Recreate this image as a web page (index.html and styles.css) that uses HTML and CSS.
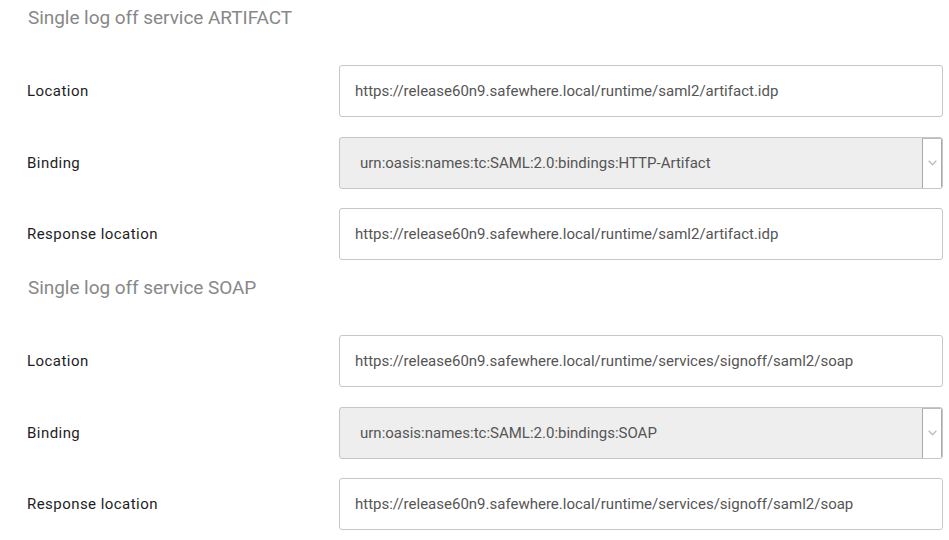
FILE: index.html
```html
<!DOCTYPE html>
<html>
<head>
<meta charset="utf-8">
<link rel="stylesheet" href="styles.css">
</head>
<body>
<div class="page">
  <section class="section">
    <h2 class="section-title">Single log off service ARTIFACT</h2>
    <div class="row">
      <label class="label">Location</label>
      <div class="input">https://release60n9.safewhere.local/runtime/saml2/artifact.idp</div>
    </div>
    <div class="row">
      <label class="label">Binding</label>
      <div class="select">
        <span class="select-value">urn:oasis:names:tc:SAML:2.0:bindings:HTTP-Artifact</span>
        <span class="select-arrow"><svg width="9" height="6" viewBox="0 0 9 6"><path d="M0.7 0.7 L4.5 4.7 L8.3 0.7" fill="none" stroke="#bdbdbd" stroke-width="1.4"/></svg></span>
      </div>
    </div>
    <div class="row">
      <label class="label">Response location</label>
      <div class="input">https://release60n9.safewhere.local/runtime/saml2/artifact.idp</div>
    </div>
  </section>
  <section class="section">
    <h2 class="section-title">Single log off service SOAP</h2>
    <div class="row">
      <label class="label">Location</label>
      <div class="input">https://release60n9.safewhere.local/runtime/services/signoff/saml2/soap</div>
    </div>
    <div class="row">
      <label class="label">Binding</label>
      <div class="select">
        <span class="select-value">urn:oasis:names:tc:SAML:2.0:bindings:SOAP</span>
        <span class="select-arrow"><svg width="9" height="6" viewBox="0 0 9 6"><path d="M0.7 0.7 L4.5 4.7 L8.3 0.7" fill="none" stroke="#bdbdbd" stroke-width="1.4"/></svg></span>
      </div>
    </div>
    <div class="row">
      <label class="label">Response location</label>
      <div class="input">https://release60n9.safewhere.local/runtime/services/signoff/saml2/soap</div>
    </div>
  </section>
</div>
</body>
</html>
```
FILE: styles.css
```css
html, body {
  margin: 0;
  padding: 0;
  background: #ffffff;
}
body {
  font-family: Roboto, "Liberation Sans", Arial, sans-serif;
}
.page {
  padding: 0 6px 0 27px;
}
.section-title {
  margin: 0;
  height: 55.5px;
  padding-top: 6px;
  box-sizing: border-box;
  font-size: 19px;
  font-weight: 400;
  line-height: 23px;
  color: #888888;
  padding-left: 1px;
  letter-spacing: -0.05px;
}
.row {
  display: grid;
  grid-template-columns: 312px 1fr;
  align-items: center;
  height: 71.5px;
}
.label {
  font-size: 15px;
  color: #1e1e1e;
  letter-spacing: 0.45px;
}
.input {
  height: 52px;
  box-sizing: border-box;
  border: 1px solid #c6c6c6;
  border-radius: 3px;
  padding: 0 15px;
  display: flex;
  align-items: center;
  font-size: 15px;
  color: #555555;
  background: #ffffff;
  white-space: nowrap;
  overflow: hidden;
}
.select {
  height: 52px;
  box-sizing: border-box;
  border: 1px solid #c6c6c6;
  border-radius: 3px;
  background: #eeeeee;
  display: flex;
  align-items: stretch;
  overflow: hidden;
}
.select-value {
  flex: 1;
  display: flex;
  align-items: center;
  padding-left: 20px;
  font-size: 15px;
  color: #555555;
  white-space: nowrap;
}
.select-arrow {
  width: 18px;
  background: #ffffff;
  border-left: 1px solid #aaaaaa;
  border-right: 1px solid #aaaaaa;
  border-top: 1px solid #bbbbbb;
  display: flex;
  align-items: center;
  justify-content: center;
}
```
